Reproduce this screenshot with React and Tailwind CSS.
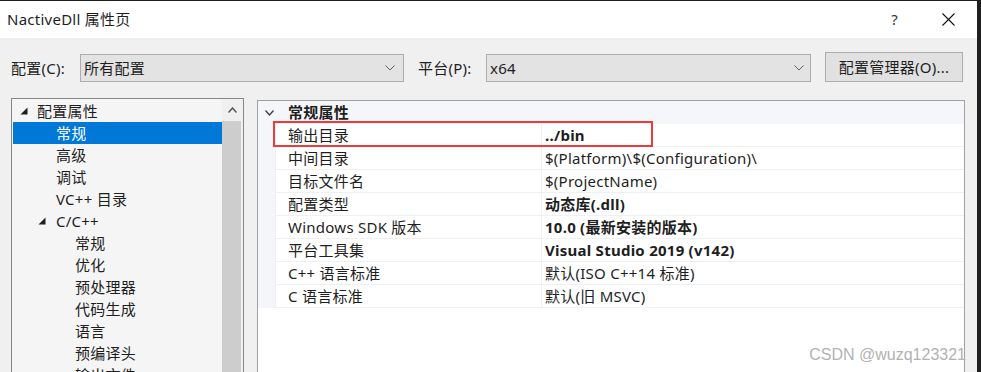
import React from "react";

const F = "font-['Noto_Sans','Noto_Sans_CJK_SC',sans-serif]";

function Chevron({ className = "" }) {
  return (
    <svg width="10" height="6" viewBox="0 0 10 6" className={className}>
      <polyline points="0.5,0.5 5,5 9.5,0.5" fill="none" stroke="#606060" strokeWidth="1" />
    </svg>
  );
}

const tree = [
  { t: "配置属性", lvl: 0, tri: true },
  { t: "常规", lvl: 1, sel: true },
  { t: "高级", lvl: 1 },
  { t: "调试", lvl: 1 },
  { t: "VC++ 目录", lvl: 1 },
  { t: "C/C++", lvl: 1, tri: true },
  { t: "常规", lvl: 2 },
  { t: "优化", lvl: 2 },
  { t: "预处理器", lvl: 2 },
  { t: "代码生成", lvl: 2 },
  { t: "语言", lvl: 2 },
  { t: "预编译头", lvl: 2 },
  { t: "输出文件", lvl: 2 },
];

const props = [
  ["输出目录", "../bin", true],
  ["中间目录", "$(Platform)\\$(Configuration)\\", false],
  ["目标文件名", "$(ProjectName)", false],
  ["配置类型", "动态库(.dll)", true],
  ["Windows SDK 版本", "10.0 (最新安装的版本)", true],
  ["平台工具集", "Visual Studio 2019 (v142)", true],
  ["C++ 语言标准", "默认(ISO C++14 标准)", false],
  ["C 语言标准", "默认(旧 MSVC)", false],
];

function Tri() {
  return (
    <svg width="8" height="8" viewBox="0 0 8 8">
      <polygon points="7.5,0.5 7.5,7.5 0.5,7.5" fill="#1e1e1e" />
    </svg>
  );
}

export default function App() {
  return (
    <div className={`w-[981px] h-[372px] overflow-hidden bg-[#1f1f1f] ${F} text-[15px] tracking-[0.25px] text-[#1e1e1e]`}>
      <div className="w-[977px] h-[371px] mt-[1px] flex flex-col bg-[#f0f0f0]">
        {/* title bar */}
        <div className="h-[37px] bg-white flex items-center shrink-0">
          <span className="ml-[7px] leading-none">NactiveDll 属性页</span>
          <span className="ml-auto mr-[44px] text-[15px] text-[#333] leading-none">?</span>
          <svg width="13" height="13" viewBox="0 0 13 13" className="mr-[22px]">
            <line x1="0.5" y1="0.5" x2="12.5" y2="12.5" stroke="#111" strokeWidth="1.1" />
            <line x1="12.5" y1="0.5" x2="0.5" y2="12.5" stroke="#111" strokeWidth="1.1" />
          </svg>
        </div>
        {/* toolbar */}
        <div className="flex items-end pt-[14px] shrink-0">
          <div className="ml-[11px] w-[69px] h-[28px] flex items-center">配置(C):</div>
          <div className="w-[324px] h-[28px] bg-[#e3e3e3] border border-[#adadad] flex items-center pl-[3px] pr-[8px]">
            <span>所有配置</span>
            <Chevron className="ml-auto" />
          </div>
          <div className="ml-[14px] w-[68px] h-[28px] flex items-center">平台(P):</div>
          <div className="w-[325px] h-[28px] bg-[#e3e3e3] border border-[#adadad] flex items-center pl-[3px] pr-[6px]">
            <span>x64</span>
            <Chevron className="ml-auto" />
          </div>
          <div className="ml-[14px] w-[138px] h-[30px] bg-[#e1e1e1] border border-[#adadad] flex items-center justify-center">
            配置管理器(O)...
          </div>
        </div>
        {/* panels */}
        <div className="flex mt-[16px] items-start">
          {/* tree */}
          <div className="ml-[11px] w-[233px] h-[300px] border border-[#868686] bg-[#f5f5f5] flex">
            <div className="w-[210px] pl-[1px] pt-[1px]">
              {tree.map((r, i) => (
                <div
                  key={i}
                  className={`h-[22px] flex items-center ${r.sel ? "bg-[#0078d7] text-white" : ""}`}
                >
                  {r.lvl === 0 && (
                    <>
                      <span className="ml-[7px] w-[17px] flex"><Tri /></span>
                      <span>{r.t}</span>
                    </>
                  )}
                  {r.lvl === 1 && (
                    r.tri ? (
                      <>
                        <span className="ml-[25px] w-[18px] flex"><Tri /></span>
                        <span>{r.t}</span>
                      </>
                    ) : (
                      <span className="ml-[43px]">{r.t}</span>
                    )
                  )}
                  {r.lvl === 2 && <span className="ml-[62px]">{r.t}</span>}
                </div>
              ))}
            </div>
            <div className="w-[21px] bg-[#f0f0f0] flex flex-col">
              <div className="h-[22px] flex items-center justify-center">
                <svg width="9" height="6" viewBox="0 0 9 6">
                  <polyline points="0.5,5.5 4.5,1 8.5,5.5" fill="none" stroke="#555" strokeWidth="1.5" />
                </svg>
              </div>
              <div className="flex-1 w-[19px] bg-[#cdcdcd]" />
            </div>
          </div>
          {/* property grid */}
          <div className="relative ml-[13px] mt-[2px] w-[708px] h-[300px] border border-[#a0a0a0] bg-white">
            <div className="h-[23px] bg-[#f4f6f9] flex items-center">
              <svg width="9" height="6" viewBox="0 0 9 6" className="ml-[7px]">
                <polyline points="0.5,0.5 4.5,5 8.5,0.5" fill="none" stroke="#444" strokeWidth="1.4" />
              </svg>
              <span className="ml-[14px] font-bold">常规属性</span>
            </div>
            {props.map(([n, v, b], i) => (
              <div key={i} className="h-[23px] flex">
                <div className="w-[17px] bg-[#f4f6f9]" />
                <div className="w-[266px] border-l border-b border-[#eef0f3] pl-[12px] flex items-center">{n}</div>
                <div className={`flex-1 border-l border-b border-[#eef0f3] pl-[3px] flex items-center ${b ? "font-bold" : ""}`}>{v}</div>
              </div>
            ))}
            <div className="absolute left-[15px] top-[20px] w-[380px] h-[26px] border-2 border-[#f03a3a]" />
            <div className="absolute right-[-2px] top-[242px] text-[16px] tracking-normal text-[#b2b2b2] font-['Liberation_Sans',sans-serif] [text-shadow:0_0_1px_#fff]">
              CSDN @wuzq123321
            </div>
          </div>
        </div>
      </div>
    </div>
  );
}
